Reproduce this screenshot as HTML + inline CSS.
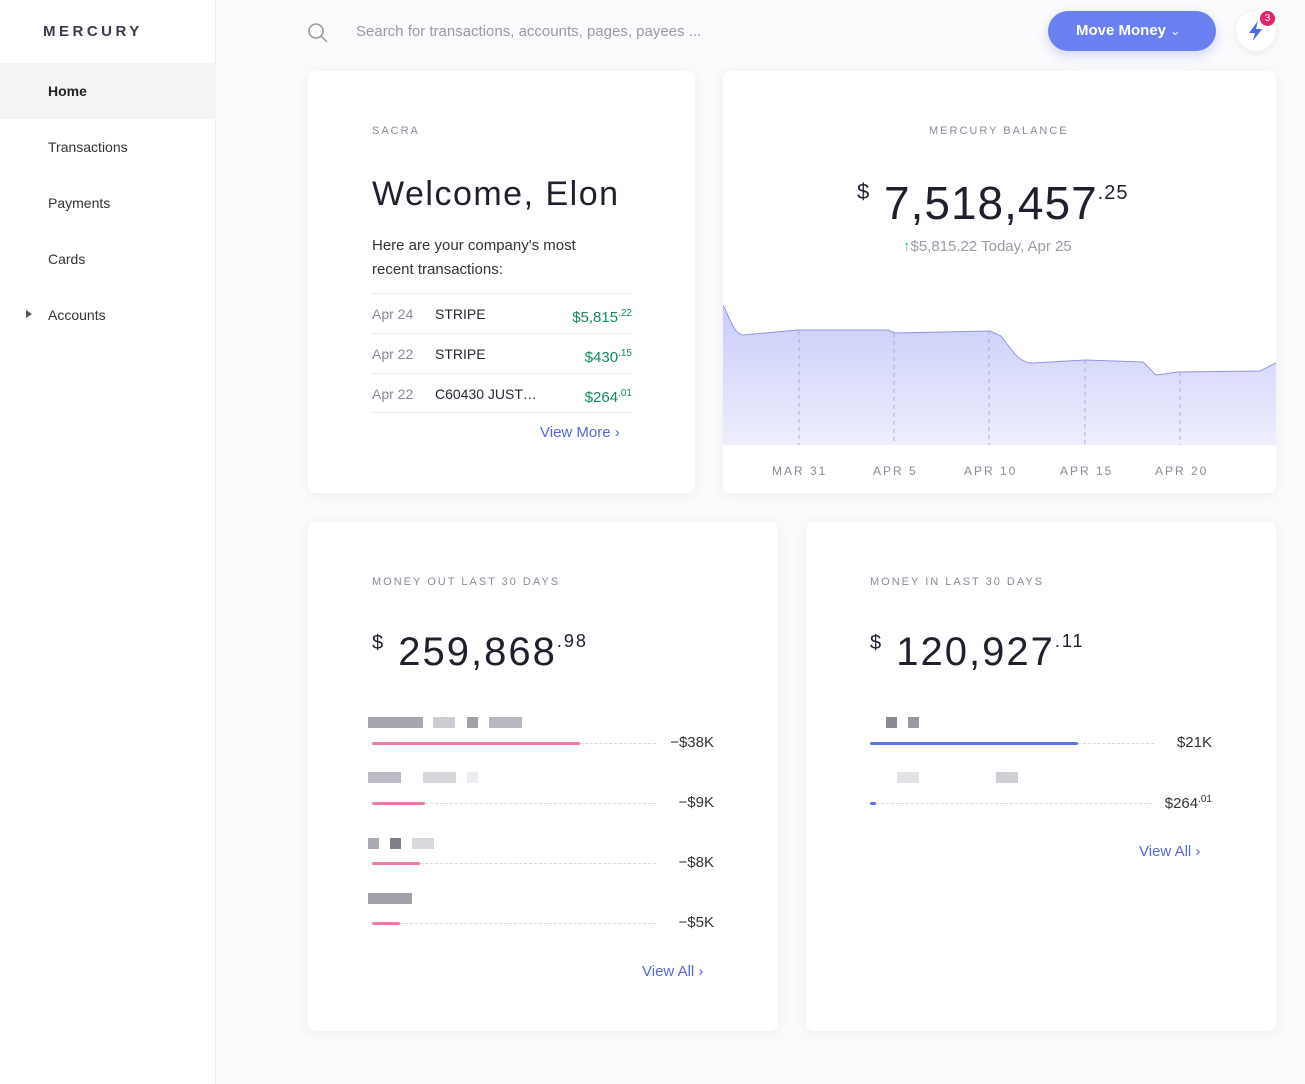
<!DOCTYPE html>
<html><head><meta charset="utf-8"><style>
*{margin:0;padding:0;box-sizing:border-box}
body{width:1305px;height:1084px;background:#fbfbfd;font-family:"Liberation Sans",sans-serif;color:#272735;position:relative;overflow:hidden}
.side{position:absolute;left:0;top:0;width:216px;height:1084px;background:#fff;border-right:1px solid #eeeef2}
.logo{position:absolute;left:43px;top:23px;font-size:15px;letter-spacing:3.5px;font-weight:bold;color:#3a3a4a}
.nav{position:absolute;left:0;width:216px;height:56px;line-height:56px;padding-left:48px;font-size:14px;color:#333}
.card{position:absolute;background:#fff;border-radius:8px;box-shadow:0 2px 14px rgba(60,60,90,.07)}
.lbl{position:absolute;font-size:11px;letter-spacing:2px;color:#8a8a98}
.abs{position:absolute}
.tx{position:absolute;left:64px;width:260px;height:40px;border-top:1px solid #ececf0;font-size:14px;line-height:40px}
.green{color:#16875e;font-size:15px}
.px{position:absolute;height:11px}
.bar{position:absolute;height:3px;border-radius:2px}
.dash{position:absolute;border-top:1px dashed #d8d8e0}
.amt{position:absolute;font-size:15px;color:#333;text-align:right}
.link{position:absolute;color:#5468e0;font-size:15px}
</style></head><body>
<div class="side">
<div class="logo">MERCURY</div>
<div class="nav" style="top:63px;background:#f4f4f7;font-weight:bold;color:#222">Home</div>
<div class="nav" style="top:119px">Transactions</div>
<div class="nav" style="top:175px">Payments</div>
<div class="nav" style="top:231px">Cards</div>
<div class="nav" style="top:287px">Accounts</div>
<div class="abs" style="left:26px;top:310px;border-left:6px solid #555;border-top:4px solid transparent;border-bottom:4px solid transparent"></div>
</div>
<svg class="abs" style="left:306px;top:21px" width="24" height="24" viewBox="0 0 24 24"><circle cx="10" cy="10" r="7" fill="none" stroke="#999" stroke-width="1.5"/><path d="M15 15L21 21" stroke="#999" stroke-width="1.5"/></svg>
<div class="abs" style="left:356px;top:23px;font-size:15px;color:#9a9aa6">Search for transactions, accounts, pages, payees ...</div>
<div class="abs" style="left:1048px;top:11px;width:168px;height:40px;border-radius:20px;background:#6b80f0;color:#fff;font-size:15px;font-weight:bold;line-height:40px;padding-left:28px;box-shadow:0 4px 12px rgba(100,120,240,.3)">Move Money <span style="font-weight:normal;font-size:12px">&#8964;</span></div>
<div class="abs" style="left:1236px;top:11px;width:40px;height:40px;border-radius:20px;background:#fff;box-shadow:0 2px 8px rgba(0,0,0,.08)"></div>
<svg class="abs" style="left:1247px;top:20px" width="18" height="22" viewBox="0 0 18 22"><path d="M11 1L2 13h6l-2 8 9-12H9z" fill="#4a6ae8"/></svg>
<div class="abs" style="left:1260px;top:11px;width:15px;height:15px;border-radius:8px;background:#e0246e;color:#fff;font-size:10px;text-align:center;line-height:15px">3</div>

<div class="card" style="left:308px;top:71px;width:387px;height:422px">
<div class="lbl" style="left:64px;top:54px">SACRA</div>
<div class="abs" style="left:64px;top:104px;font-size:34px;letter-spacing:1.5px;color:#1f1f2d">Welcome, Elon</div>
<div class="abs" style="left:64px;top:163px;font-size:15px;line-height:24px;color:#333;width:235px">Here are your company's most recent transactions:</div>
<div class="tx" style="top:222px"><span style="color:#8a8a98">Apr 24</span><span class="abs" style="left:63px">STRIPE</span><span class="abs green" style="right:0">$5,815<sup style="font-size:10px">.22</sup></span></div>
<div class="tx" style="top:262px"><span style="color:#8a8a98">Apr 22</span><span class="abs" style="left:63px">STRIPE</span><span class="abs green" style="right:0">$430<sup style="font-size:10px">.15</sup></span></div>
<div class="tx" style="top:302px;border-bottom:1px solid #ececf0"><span style="color:#8a8a98">Apr 22</span><span class="abs" style="left:63px">C60430 JUST…</span><span class="abs green" style="right:0">$264<sup style="font-size:10px">.01</sup></span></div>
<div class="link" style="left:232px;top:353px">View More ›</div>
</div>

<div class="card" style="left:723px;top:71px;width:553px;height:422px;overflow:hidden">
<div class="lbl" style="left:206px;top:54px">MERCURY BALANCE</div>
<div class="abs" style="left:134px;top:105px;font-size:46px;letter-spacing:1px;color:#1f1f2d"><span style="font-size:22px;vertical-align:20px">$</span> 7,518,457<span style="font-size:20px;vertical-align:20px">.25</span></div>
<div class="abs" style="left:180px;top:167px;font-size:15px;color:#9a9aa6"><span style="color:#3cc08a">↑</span>$5,815.22 Today, Apr 25</div>
<svg class="abs" style="left:0;top:0" width="553" height="422"><defs><linearGradient id="g" x1="0" y1="0" x2="0" y2="1"><stop offset="0" stop-color="#c9ccf9"/><stop offset="1" stop-color="#eeeefd"/></linearGradient></defs>
<path d="M0 234C8 250 12 264 20 264L75 259L165 259L172 262L267 260L278 265C290 280 295 292 310 292L362 289L420 291L433 304L455 301L537 300L553 292V374H0Z" fill="url(#g)"/>
<path d="M0 234C8 250 12 264 20 264L75 259L165 259L172 262L267 260L278 265C290 280 295 292 310 292L362 289L420 291L433 304L455 301L537 300L553 292" fill="none" stroke="#8f95e8" stroke-width="1"/>
<g stroke="#a9acd8" stroke-dasharray="4 4"><path d="M76 260V374M171 262V374M266 260V374M362 289V374M457 301V374"/></g></svg>
<div class="abs" style="top:393px;left:0;width:553px;font-size:12px;letter-spacing:2px;color:#8a8a98">
<span class="abs" style="left:49px">MAR 31</span><span class="abs" style="left:150px">APR 5</span><span class="abs" style="left:241px">APR 10</span><span class="abs" style="left:337px">APR 15</span><span class="abs" style="left:432px">APR 20</span></div>
</div>

<div class="card" style="left:308px;top:522px;width:470px;height:509px">
<div class="lbl" style="left:64px;top:54px">MONEY OUT LAST 30 DAYS</div>
<div class="abs" style="left:64px;top:108px;font-size:40px;letter-spacing:2px;color:#1f1f2d"><span style="font-size:20px;vertical-align:16px">$</span> 259,868<span style="font-size:18px;vertical-align:18px">.98</span></div>
<div class="px" style="left:60px;top:195px;width:55px;background:#a6a6b0"></div><div class="px" style="left:125px;top:195px;width:22px;background:#ccccd2"></div><div class="px" style="left:159px;top:195px;width:11px;background:#a0a0a8"></div><div class="px" style="left:181px;top:195px;width:33px;background:#b8b8c0"></div>
<div class="bar" style="left:64px;top:220px;width:208px;background:#f07aa7"></div><div class="dash" style="left:272px;top:221px;width:76px"></div><div class="amt" style="right:64px;top:212px">−$38K</div>
<div class="px" style="left:60px;top:250px;width:33px;background:#bcbcc4"></div><div class="px" style="left:115px;top:250px;width:33px;background:#d6d6dc"></div><div class="px" style="left:159px;top:250px;width:11px;background:#ececf0"></div>
<div class="bar" style="left:64px;top:280px;width:53px;background:#f07aa7"></div><div class="dash" style="left:117px;top:281px;width:231px"></div><div class="amt" style="right:64px;top:272px">−$9K</div>
<div class="px" style="left:60px;top:316px;width:11px;background:#aaaab2"></div><div class="px" style="left:82px;top:316px;width:11px;background:#808088"></div><div class="px" style="left:104px;top:316px;width:22px;background:#d8d8dd"></div>
<div class="bar" style="left:64px;top:340px;width:48px;background:#f07aa7"></div><div class="dash" style="left:112px;top:341px;width:236px"></div><div class="amt" style="right:64px;top:332px">−$8K</div>
<div class="px" style="left:60px;top:371px;width:44px;background:#a0a0a8"></div>
<div class="bar" style="left:64px;top:400px;width:28px;background:#f07aa7"></div><div class="dash" style="left:92px;top:401px;width:256px"></div><div class="amt" style="right:64px;top:392px">−$5K</div>
<div class="link" style="left:334px;top:441px">View All ›</div>
</div>

<div class="card" style="left:806px;top:522px;width:470px;height:509px">
<div class="lbl" style="left:64px;top:54px">MONEY IN LAST 30 DAYS</div>
<div class="abs" style="left:64px;top:108px;font-size:40px;letter-spacing:2px;color:#1f1f2d"><span style="font-size:20px;vertical-align:16px">$</span> 120,927<span style="font-size:18px;vertical-align:18px">.11</span></div>
<div class="px" style="left:80px;top:195px;width:11px;background:#8a8a92"></div><div class="px" style="left:102px;top:195px;width:11px;background:#9a9aa2"></div>
<div class="bar" style="left:64px;top:220px;width:208px;background:#5e74ea"></div><div class="dash" style="left:272px;top:221px;width:76px"></div><div class="amt" style="right:64px;top:212px">$21K</div>
<div class="px" style="left:91px;top:250px;width:22px;background:#e2e2e6"></div><div class="px" style="left:190px;top:250px;width:22px;background:#cfcfd5"></div>
<div class="bar" style="left:64px;top:280px;width:6px;background:#5e74ea"></div><div class="dash" style="left:70px;top:281px;width:276px"></div><div class="amt" style="right:64px;top:272px">$264<sup style="font-size:10px">.01</sup></div>
<div class="link" style="left:333px;top:321px">View All ›</div>
</div>
</body></html>
